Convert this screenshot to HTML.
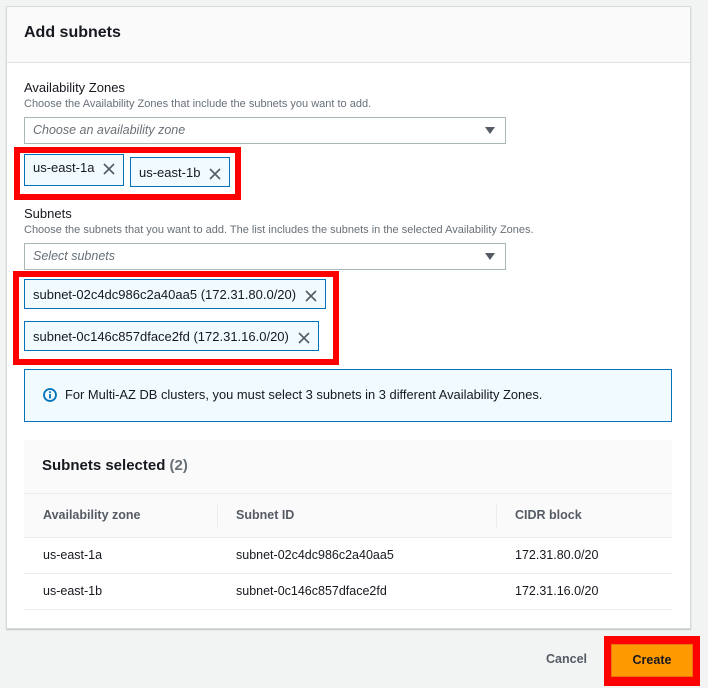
<!DOCTYPE html>
<html><head><style>
*{box-sizing:border-box;margin:0;padding:0}
body{width:708px;height:688px;background:#f2f3f3;font-family:"Liberation Sans",Arial,sans-serif;color:#16191f;position:relative;overflow:hidden}
.a{position:absolute}
.card{left:6px;top:6px;width:685px;height:623px;background:#fff;border:1px solid #d5dbdb;box-shadow:0 1px 1px rgba(0,0,0,.2)}
.hdr{left:7px;top:7px;width:683px;height:56px;background:#fafafa;border-bottom:1px solid #e0e4e4}
.lbl{font-size:13px;color:#16191f}
.desc{font-size:11px;color:#687078}
.sel{height:27px;width:482px;border:1px solid #aab7b8;font-size:12.5px;font-style:italic;color:#687078;padding:5px 8px;background:#fff}
.caret{right:10px;top:9px;width:0;height:0;border-left:5px solid transparent;border-right:5px solid transparent;border-top:7px solid #545b64}
.tok{height:30px;background:#f1faff;border:1px solid #0073bb;font-size:13px;color:#16191f;padding:7px 8px;white-space:nowrap}
.red{border:6px solid #f00}
.x{display:inline-block;vertical-align:middle;margin-left:9px}
.line{height:1px;background:#eaeded}
</style></head><body>
<div class="a card"></div>
<div class="a hdr"></div>
<div class="a" style="left:24px;top:24px;font-size:16px;font-weight:bold">Add subnets</div>

<div class="a lbl" style="left:24px;top:80px">Availability Zones</div>
<div class="a desc" style="left:24px;top:98px">Choose the Availability Zones that include the subnets you want to add.</div>
<div class="a sel" style="left:24px;top:117px">Choose an availability zone<div class="a caret"></div></div>
<div class="a red" style="left:14px;top:147px;width:227px;height:53px"></div>
<div class="a tok" style="left:24px;top:154px;height:32px;padding-top:5px">us-east-1a<svg class="x" width="12" height="12" viewBox="0 0 12 12"><path d="M1 1L11 11M11 1L1 11" stroke="#545b64" stroke-width="1.6"/></svg></div>
<div class="a tok" style="left:130px;top:157px">us-east-1b<svg class="x" width="12" height="12" viewBox="0 0 12 12"><path d="M1 1L11 11M11 1L1 11" stroke="#545b64" stroke-width="1.6"/></svg></div>

<div class="a lbl" style="left:24px;top:206px">Subnets</div>
<div class="a desc" style="left:24px;top:224px">Choose the subnets that you want to add. The list includes the subnets in the selected Availability Zones.</div>
<div class="a sel" style="left:24px;top:243px">Select subnets<div class="a caret"></div></div>
<div class="a red" style="left:13px;top:271px;width:326px;height:94px"></div>
<div class="a tok" style="left:24px;top:279px">subnet-02c4dc986c2a40aa5 (172.31.80.0/20)<svg class="x" width="12" height="12" viewBox="0 0 12 12"><path d="M1 1L11 11M11 1L1 11" stroke="#545b64" stroke-width="1.6"/></svg></div>
<div class="a tok" style="left:24px;top:321px">subnet-0c146c857dface2fd (172.31.16.0/20)<svg class="x" width="12" height="12" viewBox="0 0 12 12"><path d="M1 1L11 11M11 1L1 11" stroke="#545b64" stroke-width="1.6"/></svg></div>

<div class="a" style="left:24px;top:369px;width:648px;height:53px;background:#f1faff;border:1px solid #0073bb"></div>
<svg class="a" style="left:43px;top:388px" width="14" height="14" viewBox="0 0 14 14"><circle cx="7" cy="7" r="6" fill="none" stroke="#0073bb" stroke-width="1.8"/><rect x="6.1" y="6" width="1.8" height="4.5" fill="#0073bb"/><rect x="6.1" y="3.3" width="1.8" height="1.7" fill="#0073bb"/></svg>
<div class="a" style="left:65px;top:387px;font-size:12.9px">For Multi-AZ DB clusters, you must select 3 subnets in 3 different Availability Zones.</div>

<div class="a" style="left:24px;top:440px;width:648px;height:97px;background:#fafafa"></div>
<div class="a line" style="left:24px;top:493px;width:648px"></div>
<div class="a" style="left:42px;top:457px;font-size:15px;font-weight:bold">Subnets selected <span style="color:#687078;font-weight:bold">(2)</span></div>
<div class="a" style="left:217px;top:505px;width:1px;height:22px;background:#eaeded"></div>
<div class="a" style="left:496px;top:505px;width:1px;height:22px;background:#eaeded"></div>
<div class="a" style="left:43px;top:508px;font-size:12.5px;font-weight:bold;color:#545b64">Availability zone</div>
<div class="a" style="left:236px;top:508px;font-size:12.5px;font-weight:bold;color:#545b64">Subnet ID</div>
<div class="a" style="left:515px;top:508px;font-size:12.5px;font-weight:bold;color:#545b64">CIDR block</div>
<div class="a line" style="left:24px;top:537px;width:648px"></div>
<div class="a" style="left:43px;top:548px;font-size:12.5px">us-east-1a</div>
<div class="a" style="left:236px;top:548px;font-size:12.5px">subnet-02c4dc986c2a40aa5</div>
<div class="a" style="left:515px;top:548px;font-size:12.5px">172.31.80.0/20</div>
<div class="a line" style="left:24px;top:573px;width:648px"></div>
<div class="a" style="left:43px;top:584px;font-size:12.5px">us-east-1b</div>
<div class="a" style="left:236px;top:584px;font-size:12.5px">subnet-0c146c857dface2fd</div>
<div class="a" style="left:515px;top:584px;font-size:12.5px">172.31.16.0/20</div>
<div class="a line" style="left:24px;top:609px;width:648px"></div>

<div class="a" style="left:546px;top:652px;font-size:12.5px;font-weight:bold;color:#545b64">Cancel</div>
<div class="a" style="left:604px;top:636px;width:96px;height:50px;background:#f00"></div>
<div class="a" style="left:611px;top:644px;width:82px;height:33px;background:#ff9900;border:1px solid #ec7211;font-size:12.5px;font-weight:bold;text-align:center;line-height:31px;color:#16191f">Create</div>
</body></html>
